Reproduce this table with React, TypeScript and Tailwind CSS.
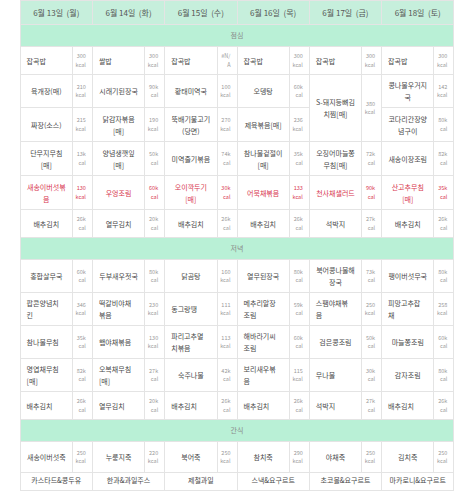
import React from 'react';

type Cell = { n: string; k?: string; l?: boolean; red?: boolean; rs?: number; skip?: boolean };
type Row = { h: string; cells: Cell[] };

const days = ['6월 13일 (월)', '6월 14일 (화)', '6월 15일 (수)', '6월 16일 (목)', '6월 17일 (금)', '6월 18일 (토)'];

const lunch: Row[] = [
    {
        h: 'h-[28px]',
        cells: [
            { n: '잡곡밥', k: '300 kcal', l: true },
            { n: '쌀밥', k: '300 kcal', l: true },
            { n: '잡곡밥', k: '#N/A', l: true },
            { n: '잡곡밥', k: '300 kcal', l: true },
            { n: '잡곡밥', k: '300 kcal', l: true },
            { n: '잡곡밥', k: '300 kcal', l: true },
        ],
    },
    {
        h: 'h-[33px]',
        cells: [
            { n: '육개장(매)', k: '210 kcal' },
            { n: '시래기된장국', k: '90kcal' },
            { n: '황태미역국', k: '100 kcal' },
            { n: '오뎅탕', k: '60kcal' },
            { n: 'S-돼지등뼈김\n치찜[매]', k: '380 kcal', rs: 2 },
            { n: '콩나물우거지\n국', k: '142 kcal' },
        ],
    },
    {
        h: 'h-[34px]',
        cells: [
            { n: '짜장(소스)', k: '215 kcal' },
            { n: '닭감자볶음\n[매]', k: '190 kcal' },
            { n: '뚝배기불고기\n(당면)', k: '270 kcal' },
            { n: '제육볶음[매]', k: '236 kcal' },
            { n: '', skip: true },
            { n: '코다리간장양\n념구이', k: '80kcal' },
        ],
    },
    {
        h: 'h-[34px]',
        cells: [
            { n: '단무지무침\n[매]', k: '13kcal' },
            { n: '양념생깻잎\n[매]', k: '50kcal' },
            { n: '미역줄기볶음', k: '74kcal' },
            { n: '참나물겉절이\n[매]', k: '35kcal' },
            { n: '오징어마늘쫑\n무침[매]', k: '72kcal' },
            { n: '새송이장조림', k: '82kcal' },
        ],
    },
    {
        h: 'h-[34px]',
        cells: [
            { n: '새송이버섯볶\n음', k: '130 kcal', red: true },
            { n: '우엉조림', k: '60kcal', red: true },
            { n: '오이깍두기\n[매]', k: '30kcal', red: true },
            { n: '어묵채볶음', k: '133 kcal', red: true },
            { n: '천사채샐러드', k: '90kcal', red: true },
            { n: '산고추무침\n[매]', k: '35kcal', red: true },
        ],
    },
    {
        h: 'h-[28px]',
        cells: [
            { n: '배추김치', k: '26kcal' },
            { n: '열무김치', k: '20kcal' },
            { n: '배추김치', k: '26kcal' },
            { n: '배추김치', k: '26kcal' },
            { n: '석박지', k: '27kcal' },
            { n: '배추김치', k: '26kcal' },
        ],
    },
];

const dinner: Row[] = [
    {
        h: 'h-[33px]',
        cells: [
            { n: '홍합살무국', k: '60kcal' },
            { n: '두부새우젓국', k: '80kcal' },
            { n: '닭곰탕', k: '160 kcal' },
            { n: '열무된장국', k: '80kcal' },
            { n: '북어콩나물해\n장국', k: '73kcal' },
            { n: '팽이버섯무국', k: '80kcal' },
        ],
    },
    {
        h: 'h-[33px]',
        cells: [
            { n: '팝콘양념치\n킨', k: '346 kcal', l: true },
            { n: '떡갈비야채\n볶음', k: '230 kcal', l: true },
            { n: '동그랑땡', k: '111 kcal', l: true },
            { n: '메추리알장\n조림', k: '59kcal', l: true },
            { n: '스팸야채볶\n음', k: '250 kcal', l: true },
            { n: '피망고추잡\n채', k: '258 kcal', l: true },
        ],
    },
    {
        h: 'h-[33px]',
        cells: [
            { n: '참나물무침', k: '35kcal', l: true },
            { n: '햄야채볶음', k: '130 kcal', l: true },
            { n: '파리고추멸\n치볶음', k: '113 kcal', l: true },
            { n: '해바라기씨\n조림', k: '60kcal', l: true },
            { n: '검은콩조림', k: '50kcal' },
            { n: '마늘쫑조림', k: '60kcal' },
        ],
    },
    {
        h: 'h-[33px]',
        cells: [
            { n: '명엽채무침\n[매]', k: '82kcal', l: true },
            { n: '오복채무침\n[매]', k: '27kcal', l: true },
            { n: '숙주나물', k: '42kcal' },
            { n: '보리새우볶\n음', k: '115 kcal', l: true },
            { n: '무나물', k: '30kcal', l: true },
            { n: '감자조림', k: '80kcal' },
        ],
    },
    {
        h: 'h-[28px]',
        cells: [
            { n: '배추김치', k: '26kcal', l: true },
            { n: '열무김치', k: '20kcal', l: true },
            { n: '배추김치', k: '26kcal', l: true },
            { n: '배추김치', k: '26kcal', l: true },
            { n: '석박지', k: '27kcal', l: true },
            { n: '배추김치', k: '26kcal', l: true },
        ],
    },
];

const snack: Row[] = [
    {
        h: 'h-[31px]',
        cells: [
            { n: '새송이버섯죽', k: '250 kcal' },
            { n: '누룽지죽', k: '220 kcal' },
            { n: '북어죽', k: '250 kcal' },
            { n: '참치죽', k: '290 kcal' },
            { n: '야채죽', k: '250 kcal' },
            { n: '김치죽', k: '250 kcal' },
        ],
    },
];

const desserts = ['카스타드&콩두유', '한과&과일주스', '제철과일', '스낵&요구르트', '초코볼&요구르트', '마카로니&요구르트'];

// "300 kcal" -> 300 / kcal, "90kcal" -> 90k / cal
const kcalLines = (k: string) => {
    if (k.includes(' ')) return k.split(' ');
    if (k === '#N/A') return ['#N/', 'A'];
    const i = k.indexOf('k') + 1;
    return [k.slice(0, i), k.slice(i)];
};

const border = 'border border-[#e4e4e4]';

const MenuRows = ({ rows }: { rows: Row[] }) => (
    <>
        {rows.map((row, ri) => (
            <tr key={ri} className={row.h}>
                {row.cells.map((c, ci) =>
                    c.skip ? null : (
                        <React.Fragment key={ci}>
                            <td
                                rowSpan={c.rs}
                                className={`${border} whitespace-pre text-[7px] leading-[12px] ${c.l ? 'text-left pl-[6px]' : 'text-center'} ${c.red ? 'text-[#d8374f]' : 'text-[#4a4a4a]'}`}
                            >
                                {c.n}
                            </td>
                            <td
                                rowSpan={c.rs}
                                className={`${border} text-right pr-[6px] text-[5.5px] leading-[8.5px] whitespace-pre ${c.red ? 'text-[#d8374f]' : 'text-[#999]'}`}
                            >
                                {c.k && kcalLines(c.k).join('\n')}
                            </td>
                        </React.Fragment>
                    )
                )}
            </tr>
        ))}
    </>
);

const Section = ({ label }: { label: string }) => (
    <tr className="h-[22px] bg-[#b9f0d6]">
        <td colSpan={12} className={`${border} text-center text-[7px] text-[#8a8a8a]`}>
            {label}
        </td>
    </tr>
);

export default function App() {
    return (
        <div className="min-h-screen bg-white" style={{ fontFamily: '"Noto Sans CJK KR", "Noto Sans", sans-serif' }}>
            <table className="mx-auto w-[434px] table-fixed border-collapse">
                <colgroup>
                    {days.map((d) => (
                        <React.Fragment key={d}>
                            <col className="w-[52.3px]" />
                            <col className="w-[20px]" />
                        </React.Fragment>
                    ))}
                </colgroup>
                <tbody>
                    <tr className="h-[24px] bg-[#c6efdc]">
                        {days.map((d) => (
                            <td key={d} colSpan={2} className={`${border} text-center text-[8px] text-[#555] whitespace-pre`}>
                                {d.replace(' (', '  (')}
                            </td>
                        ))}
                    </tr>
                    <Section label="점심" />
                    <MenuRows rows={lunch} />
                    <Section label="저녁" />
                    <MenuRows rows={dinner} />
                    <Section label="간식" />
                    <MenuRows rows={snack} />
                    <tr className="h-[18px]">
                        {desserts.map((d) => (
                            <td key={d} colSpan={2} className={`${border} text-center align-top pt-[1px] text-[7px] leading-[12px] text-[#4a4a4a]`}>
                                {d}
                            </td>
                        ))}
                    </tr>
                </tbody>
            </table>
        </div>
    );
}
